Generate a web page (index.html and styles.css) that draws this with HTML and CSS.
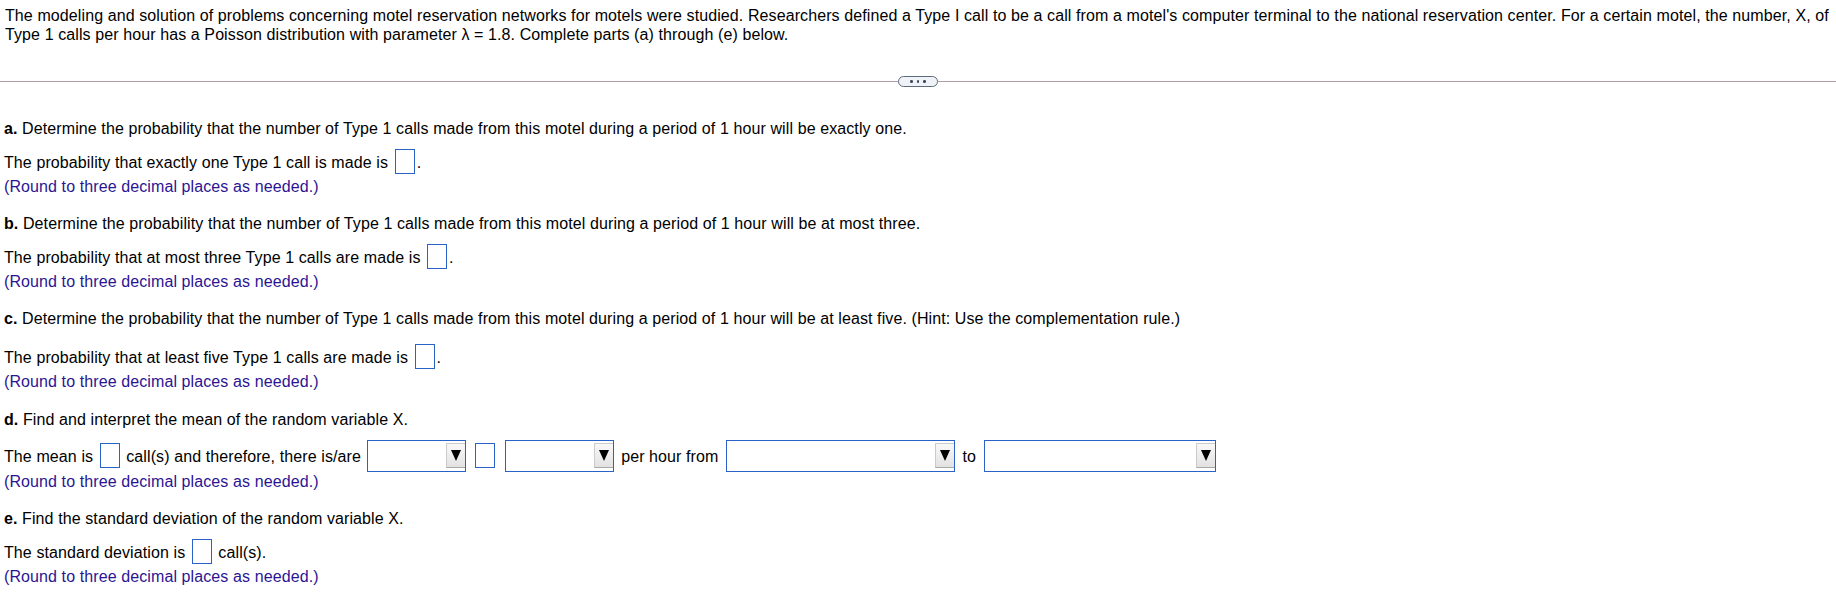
FILE: index.html
```html
<!DOCTYPE html>
<html>
<head>
<meta charset="utf-8">
<link rel="stylesheet" href="styles.css">
</head>
<body>
<div class="intro">The modeling and solution of problems concerning motel reservation networks for motels were studied. Researchers defined a Type I call to be a call from a motel's computer terminal to the national reservation center. For a certain motel, the number, X, of Type 1 calls per hour has a Poisson distribution with parameter λ = 1.8. Complete parts (a) through (e) below.</div>
<div class="sep"><span class="line"></span><span class="more"><i></i><i></i><i></i></span><span class="line"></span></div>
<div class="parts">
  <div class="q q-first"><b>a.</b> Determine the probability that the number of Type 1 calls made from this motel during a period of 1 hour will be exactly one.</div>
  <div class="ans">The probability that exactly one Type 1 call is made is <span class="box"></span>.</div>
  <div class="note">(Round to three decimal places as needed.)</div>

  <div class="q"><b>b.</b> Determine the probability that the number of Type 1 calls made from this motel during a period of 1 hour will be at most three.</div>
  <div class="ans">The probability that at most three Type 1 calls are made is <span class="box"></span>.</div>
  <div class="note">(Round to three decimal places as needed.)</div>

  <div class="q"><b>c.</b> Determine the probability that the number of Type 1 calls made from this motel during a period of 1 hour will be at least five. (Hint: Use the complementation rule.)</div>
  <div class="ans ans-c">The probability that at least five Type 1 calls are made is <span class="box"></span>.</div>
  <div class="note">(Round to three decimal places as needed.)</div>

  <div class="q q-d"><b>d.</b> Find and interpret the mean of the random variable X.</div>
  <div class="ans ans-d">The mean is <span class="box"></span> call(s) and therefore, there is/are <span class="sel w1"><span class="btn"><svg width="10" height="11" viewBox="0 0 10 11"><polygon points="0,0 10,0 5,11" fill="#000"/></svg></span></span> <span class="box"></span> <span class="sel w2"><span class="btn"><svg width="10" height="11" viewBox="0 0 10 11"><polygon points="0,0 10,0 5,11" fill="#000"/></svg></span></span> per hour from <span class="sel w3"><span class="btn"><svg width="10" height="11" viewBox="0 0 10 11"><polygon points="0,0 10,0 5,11" fill="#000"/></svg></span></span> to <span class="sel w4"><span class="btn"><svg width="10" height="11" viewBox="0 0 10 11"><polygon points="0,0 10,0 5,11" fill="#000"/></svg></span></span></div>
  <div class="note note-d">(Round to three decimal places as needed.)</div>

  <div class="q"><b>e.</b> Find the standard deviation of the random variable X.</div>
  <div class="ans">The standard deviation is <span class="box"></span> call(s).</div>
  <div class="note">(Round to three decimal places as needed.)</div>
</div>
</body>
</html>
```

FILE: styles.css
```css
html, body {
  margin: 0;
  padding: 0;
  background: #fff;
}
body {
  font-family: "Liberation Sans", Arial, sans-serif;
  font-size: 16px;
  line-height: 19px;
  letter-spacing: 0.1px;
  color: #000;
}
.intro {
  padding: 6px 4px 0 5px;
}
.sep {
  margin-top: 32px;
  height: 11px;
  display: flex;
  align-items: center;
}
.sep .line {
  flex: 1;
  height: 1px;
  background: #b29ca5;
}
.more {
  width: 40px;
  height: 11px;
  box-sizing: border-box;
  border: 1.5px solid #5c6b7b;
  border-radius: 6px;
  background: #eff3f7;
  display: flex;
  align-items: center;
  justify-content: center;
  gap: 4px;
}
.more i {
  width: 2.5px;
  height: 2.5px;
  border-radius: 50%;
  background: #3f4c5a;
}
.parts {
  padding-left: 4px;
}
.q {
  margin-top: 18px;
}
.q-first {
  margin-top: 32px;
}
.q-d {
  margin-top: 19px;
}
.ans {
  margin-top: 11px;
}
.ans-c {
  margin-top: 16px;
}
.note {
  margin-top: 3px;
  color: #2b1593;
}
.note-d {
  margin-top: 0;
}
.box {
  display: inline-block;
  width: 20px;
  height: 25px;
  box-sizing: border-box;
  border: 1px solid #2a63c6;
  vertical-align: -6px;
  margin: 0 2px;
}
.sel {
  display: inline-block;
  overflow: hidden;
  height: 32px;
  box-sizing: border-box;
  border: 1px solid #2a63c6;
  padding-top: 2px;
  vertical-align: -10px;
  margin: 0 3px;
  background: #fff;
}
.w1 { width: 99px; margin-left: 1px; }
.w2 { width: 109px; }
.w3 { width: 229px; }
.w4 { width: 232px; }
.btn {
  width: 19px;
  height: 25px;
  margin-left: auto;
  box-sizing: border-box;
  border: 1px solid #cbcbcb;
  border-bottom-color: #a9a9a9;
  border-right: 0;
  background: linear-gradient(#f8f8f8, #e2e2e2);
  display: flex;
  align-items: center;
  justify-content: center;
}
.btn svg {
  display: block;
}
```
